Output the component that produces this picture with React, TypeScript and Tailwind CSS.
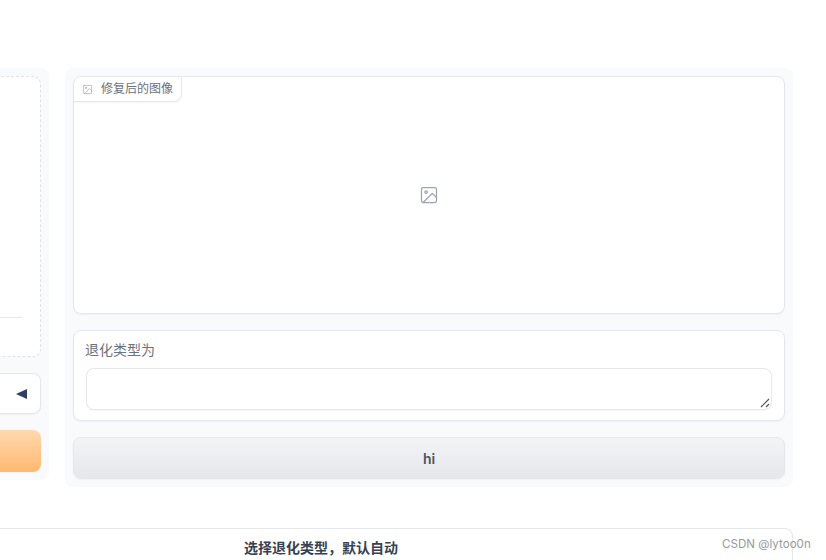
import React from 'react';

const font = "font-['Inter','Liberation_Sans','Noto_Sans_CJK_SC',sans-serif]";
const softShadow = 'shadow-[0_1px_2px_rgba(0,0,0,0.04)]';

function ImageIcon({ className }: { className: string }) {
  return (
    <svg viewBox="0 0 24 24" fill="none" stroke="currentColor" strokeWidth="1.5" strokeLinecap="round" strokeLinejoin="round" className={className}>
      <rect x="3" y="3" width="18" height="18" rx="2" ry="2" />
      <circle cx="8.5" cy="8.5" r="1.5" />
      <polyline points="21 15 16 10 5 21" />
    </svg>
  );
}

function LeftColumn() {
  return (
    <div className="w-[49px] h-[412px] shrink-0 bg-[#f9fafb] rounded-r-[8px] flex flex-col items-end pt-2 pr-2 gap-4 overflow-hidden">
      <div className="w-[60px] h-[281px] shrink-0 bg-white border border-dashed border-[#e0e2e6] rounded-r-[8px] border-l-0 flex flex-col justify-end pb-[38px]">
        <div className="w-[41px] h-px bg-[#e5e7eb]" />
      </div>
      <div className={`w-[60px] h-[41px] shrink-0 bg-white border border-[#e5e7eb] border-l-0 rounded-r-[8px] ${softShadow} flex items-center justify-end pr-[13px]`}>
        <span className="w-0 h-0 border-y-[5px] border-y-transparent border-r-[11px] border-r-[#2f3f5f]" />
      </div>
      <div className={`w-[60px] h-[42px] shrink-0 rounded-r-[8px] bg-gradient-to-b from-[#ffd9ae] to-[#ffb870] ${softShadow}`} />
    </div>
  );
}

function RightColumn() {
  return (
    <div className="w-[728px] h-[419px] shrink-0 ml-4 bg-[#f9fafb] rounded-[8px] p-2 flex flex-col gap-4">
      <div className={`relative h-[238px] shrink-0 bg-white border border-[#e5e7eb] rounded-[8px] ${softShadow} flex items-center justify-center`}>
        <div className={`absolute left-0 top-0 h-[25px] w-[108px] bg-white border-r border-b border-[#e5e7eb] rounded-tl-[8px] rounded-br-[8px] ${softShadow} flex items-center pl-[8px] gap-[8px] text-[12px] text-[#6b7280]`}>
          <ImageIcon className="w-[11px] h-[11px] text-[#9ca3af]" />
          <span>修复后的图像</span>
        </div>
        <ImageIcon className="w-[20px] h-[20px] text-[#9ca3af]" />
      </div>
      <div className={`h-[91px] shrink-0 bg-white border border-[#e5e7eb] rounded-[8px] ${softShadow} px-3 pt-[9px]`}>
        <div className="-ml-px text-[14px] leading-[20px] text-[#6b7280]">退化类型为</div>
        <div className={`relative mt-[8px] h-[42px] bg-white border border-[#e5e7eb] rounded-[8px] ${softShadow}`}>
          <svg viewBox="0 0 10 10" className="absolute right-[1px] bottom-[1px] w-[10px] h-[10px] text-[#555]" stroke="currentColor" strokeWidth="1.2">
            <line x1="1" y1="9" x2="9" y2="1" />
            <line x1="6" y1="9" x2="9" y2="6" />
          </svg>
        </div>
      </div>
      <button className={`h-[42px] shrink-0 rounded-[8px] bg-gradient-to-b from-[#f3f4f6] to-[#e5e7eb] border border-[#e5e7eb] ${softShadow} text-[14px] font-semibold text-[#4b5563]`}>
        hi
      </button>
    </div>
  );
}

export default function App() {
  return (
    <div className={`relative w-[826px] h-[560px] bg-white overflow-hidden ${font}`}>
      <div className="flex pt-[68px]">
        <LeftColumn />
        <RightColumn />
      </div>
      <div className="mt-[41px] w-[793px] h-[60px] bg-white border border-[#e5e7eb] rounded-tr-[8px] border-l-0 pt-[9px]">
        <div className="w-[642px] text-center text-[14px] leading-[20px] font-semibold text-[#374151]">选择退化类型，默认自动</div>
      </div>
      <span className="absolute left-[722px] top-[536px] text-[11.6px] text-[#999999]">CSDN @lytoo0n</span>
    </div>
  );
}
